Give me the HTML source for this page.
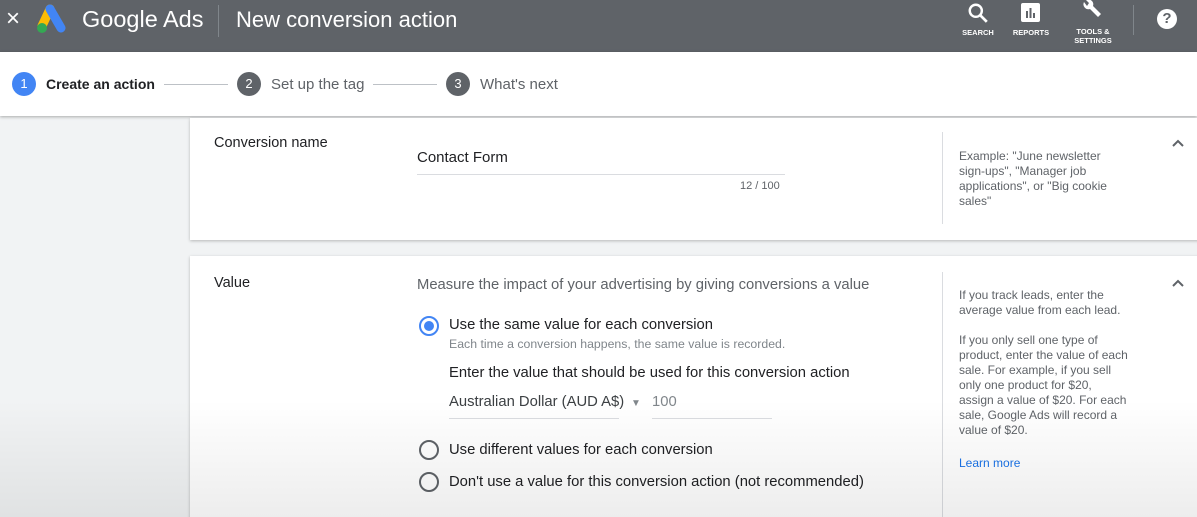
<!DOCTYPE html><html><head><style>
*{margin:0;padding:0;box-sizing:border-box}
html,body{width:1197px;height:517px;overflow:hidden}
body{background:#f1f3f4;font-family:"Liberation Sans",Arial,sans-serif;position:relative;color:#202124}
.a{position:absolute}
.hdr{left:0;top:0;width:1197px;height:52px;background:#5f6368;color:#fff}
.step{left:0;top:52px;width:1197px;height:64px;background:#fff;box-shadow:0 1px 3px rgba(0,0,0,.3)}
.card{background:#fff;box-shadow:0 1px 3px rgba(0,0,0,.25)}
.circ{width:24px;height:24px;border-radius:50%;color:#fff;font-size:13px;text-align:center;line-height:24px}
.small{font-size:7.5px;font-weight:bold;text-align:center;line-height:9px}
.radio{width:20px;height:20px;border:2px solid #5f6368;border-radius:50%}
.help{font-size:12px;color:#5f6368;line-height:15px}
.t{font-size:14.8px}
</style></head><body>
<div class="a hdr">
 <div class="a" style="left:6px;top:5px;font-size:24px;font-weight:300">×</div>
 <svg class="a" style="left:36px;top:4px" width="34" height="30" viewBox="0 0 34 30"><path d="M14 5 L6 22" stroke="#fbbc04" stroke-width="9" stroke-linecap="round"/><path d="M14 5 L25 24" stroke="#4285f4" stroke-width="9" stroke-linecap="round"/><circle cx="6" cy="24" r="5" fill="#34a853"/></svg>
 <div class="a" style="left:82px;top:6px;font-size:23.5px">Google Ads</div>
 <div class="a" style="left:218px;top:5px;width:1px;height:32px;background:#80868b"></div>
 <div class="a" style="left:236px;top:7px;font-size:22px">New conversion action</div>
 <svg class="a" style="left:967px;top:2px" width="22" height="22" viewBox="0 0 20 20"><circle cx="8" cy="8" r="5.5" fill="none" stroke="#fff" stroke-width="2.2"/><path d="M12 12 L18 18" stroke="#fff" stroke-width="2.5"/></svg>
 <div class="a small" style="left:956px;top:28px;width:44px">SEARCH</div>
 <svg class="a" style="left:1021px;top:3px" width="19" height="19"><rect width="19" height="19" rx="2" fill="#fff"/><rect x="5" y="8" width="2" height="7" fill="#5f6368"/><rect x="8.5" y="5" width="2" height="10" fill="#5f6368"/><rect x="12" y="10" width="2" height="5" fill="#5f6368"/></svg>
 <div class="a small" style="left:1006px;top:28px;width:50px">REPORTS</div>
 <svg class="a" style="left:1080px;top:0" width="26" height="22" viewBox="0 0 26 22"><path d="M4 2 a5 5 0 0 0 6 7 L18 17 l3 -3 L13 6 A5 5 0 0 0 6 0 L9 3 7 6 4 2Z" fill="#fff"/></svg>
 <div class="a small" style="left:1066px;top:27px;width:54px">TOOLS &amp;<br>SETTINGS</div>
 <div class="a" style="left:1133px;top:5px;width:1px;height:30px;background:#80868b"></div>
 <div class="a" style="left:1157px;top:9px;width:20px;height:20px;border-radius:50%;background:#fff;color:#5f6368;font-weight:bold;font-size:15px;text-align:center;line-height:20px">?</div>
</div>
<div class="a step">
 <div class="a circ" style="left:12px;top:20px;background:#4285f4">1</div>
 <div class="a" style="left:46px;top:24px;font-size:14px;font-weight:bold;color:#202124">Create an action</div>
 <div class="a" style="left:164px;top:32px;width:64px;height:1px;background:#bdc1c6"></div>
 <div class="a circ" style="left:237px;top:20px;background:#5f6368">2</div>
 <div class="a" style="left:271px;top:24px;font-size:15px;color:#5f6368">Set up the tag</div>
 <div class="a" style="left:373px;top:32px;width:64px;height:1px;background:#bdc1c6"></div>
 <div class="a circ" style="left:446px;top:20px;background:#5f6368">3</div>
 <div class="a" style="left:480px;top:24px;font-size:15px;color:#5f6368">What's next</div>
</div>
<div class="a card" style="left:190px;top:118px;width:1010px;height:122px">
 <div class="a" style="left:24px;top:17px;font-size:14.5px">Conversion name</div>
 <div class="a" style="left:227px;top:31px;font-size:15px">Contact Form</div>
 <div class="a" style="left:227px;top:56px;width:368px;height:1px;background:#dadce0"></div>
 <div class="a" style="left:550px;top:62px;font-size:11px;color:#5f6368">12 / 100</div>
 <div class="a" style="left:752px;top:14px;width:1px;height:92px;background:#dadce0"></div>
 <div class="a help" style="left:769px;top:31px;width:168px">Example: "June newsletter sign-ups", "Manager job applications", or "Big cookie sales"</div>
 <svg class="a" style="left:981px;top:21px" width="14" height="9"><path d="M2 7 L7 2 L12 7" stroke="#5f6368" stroke-width="2" fill="none"/></svg>
</div>
<div class="a card" style="left:190px;top:256px;width:1010px;height:270px">
 <div class="a" style="left:24px;top:19px;font-size:14.5px">Value</div>
 <div class="a t" style="left:227px;top:21px;color:#5f6368">Measure the impact of your advertising by giving conversions a value</div>
 <div class="a radio" style="left:229px;top:60px;border-color:#4285f4"><div style="margin:3px;width:10px;height:10px;border-radius:50%;background:#4285f4"></div></div>
 <div class="a t" style="left:259px;top:61px">Use the same value for each conversion</div>
 <div class="a" style="left:259px;top:81px;font-size:12.3px;color:#80868b">Each time a conversion happens, the same value is recorded.</div>
 <div class="a t" style="left:259px;top:109px">Enter the value that should be used for this conversion action</div>
 <div class="a t" style="left:259px;top:138px;color:#3c4043">Australian Dollar (AUD A$) <span style="color:#80868b;font-size:10px">&nbsp;▼</span></div>
 <div class="a" style="left:259px;top:162px;width:170px;height:1px;background:#dadce0"></div>
 <div class="a t" style="left:462px;top:138px;color:#80868b">100</div>
 <div class="a" style="left:462px;top:162px;width:120px;height:1px;background:#dadce0"></div>
 <div class="a radio" style="left:229px;top:184px"></div>
 <div class="a t" style="left:259px;top:186px">Use different values for each conversion</div>
 <div class="a radio" style="left:229px;top:216px"></div>
 <div class="a t" style="left:259px;top:218px">Don't use a value for this conversion action (not recommended)</div>
 <div class="a" style="left:752px;top:16px;width:1px;height:260px;background:#dadce0"></div>
 <div class="a help" style="left:769px;top:32px;width:170px">If you track leads, enter the average value from each lead.<br><br>If you only sell one type of product, enter the value of each sale. For example, if you sell only one product for $20, assign a value of $20. For each sale, Google Ads will record a value of $20.</div>
 <div class="a" style="left:769px;top:200px;font-size:12px;color:#1a73e8">Learn more</div>
 <svg class="a" style="left:981px;top:23px" width="14" height="9"><path d="M2 7 L7 2 L12 7" stroke="#5f6368" stroke-width="2" fill="none"/></svg>
</div>
<div class="a" style="left:0;top:400px;width:1197px;height:117px;background:linear-gradient(rgba(0,0,0,0),rgba(0,0,0,.07))"></div>
</body></html>
